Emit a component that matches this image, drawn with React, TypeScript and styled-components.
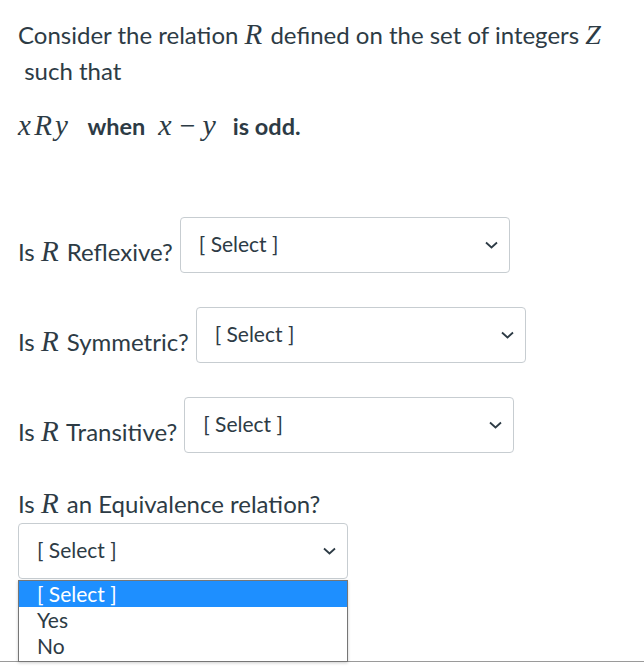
import React from "react";
import styled, { createGlobalStyle } from "styled-components";

const Global = createGlobalStyle`
  html, body { margin: 0; padding: 0; background: #fff; }
  body { font-family: Lato, "Open Sans", sans-serif; color: #2d3b45; }
`;

const Page = styled.div`
  width: 644px;
  height: 669px;
  overflow: hidden;
  box-sizing: border-box;
  padding: 16px 0 0 0;
  display: flex;
  flex-direction: column;
`;

const Content = styled.div`
  padding-left: 18px;
  display: flex;
  flex-direction: column;
`;

const Para = styled.p<{ $mt?: number }>`
  margin: ${(p) => p.$mt ?? 0}px 0 0 0;
  font-size: 24px;
  line-height: 36px;
  font-weight: 400;
`;

const Bold = styled.span<{ $ml?: number }>`
  font-weight: 700;
  font-size: 23.5px;
  margin-left: ${(p) => p.$ml ?? 0}px;
`;

const M = styled.span<{ $size?: number; $ml?: number; $ls?: number }>`
  font-family: "Liberation Serif", "DejaVu Serif", serif;
  font-style: italic;
  font-size: ${(p) => p.$size ?? 29}px;
  letter-spacing: ${(p) => p.$ls ?? 1}px;
  margin-left: ${(p) => p.$ml ?? 0}px;
`;

const Minus = styled.span`
  font-family: "Liberation Serif", serif;
  font-size: 28px;
  margin: 0 7px;
`;

const Row = styled.div<{ $mt: number }>`
  display: flex;
  align-items: flex-end;
  margin-top: ${(p) => p.$mt}px;
`;

const Label = styled.span`
  font-size: 24px;
  line-height: 30px;
  padding-bottom: 6px;
  margin-right: 7px;
  white-space: nowrap;
`;

const SelectBox = styled.div`
  position: relative;
  width: 330px;
  height: 56px;
  box-sizing: border-box;
  border: 1px solid #c7cdd1;
  border-radius: 4px;
  background: #fff;
  display: flex;
  align-items: center;
  justify-content: space-between;
  padding: 0 11px 0 18px;
  font-size: 21px;
  color: #2d3b45;
`;

const SelectText = styled.span`
  margin-top: -3px;
`;

const Block = styled.div`
  display: flex;
  flex-direction: column;
  margin-top: 35px;
`;

const BlockLabel = styled.span`
  font-size: 24px;
  line-height: 30px;
  margin-bottom: 4px;
`;

const SelectWrap = styled.div`
  position: relative;
  width: 330px;
`;

const Menu = styled.ul`
  position: absolute;
  left: 0;
  top: 57px;
  width: 330px;
  box-sizing: border-box;
  margin: 0;
  padding: 0 0 2px 0;
  list-style: none;
  background: #fff;
  border: 1px solid #767676;
  box-shadow: 0 1px 3px rgba(0, 0, 0, 0.2);
  z-index: 2;
`;

const Option = styled.li<{ $active?: boolean }>`
  height: 26px;
  line-height: 26px;
  padding-left: 18px;
  font-size: 21px;
  background: ${(p) => (p.$active ? "#1e8fff" : "#fff")};
  color: ${(p) => (p.$active ? "#fff" : "#2d3b45")};
`;

const Divider = styled.div`
  margin-top: 82px;
  height: 1px;
  background: #9a9a9a;
  width: 100%;
`;

const Chevron = () => (
  <svg width="13" height="8" viewBox="0 0 13 8">
    <polyline points="1,1.5 6.5,6.5 12,1.5" fill="none" stroke="#2d3b45" strokeWidth="1.8" />
  </svg>
);

const Select = () => (
  <SelectBox>
    <SelectText>[ Select ]</SelectText>
    <Chevron />
  </SelectBox>
);

const R = () => <M $ls={2}>R</M>;

export default function App() {
  return (
    <Page>
      <Global />
      <Content>
        <Para>
          Consider the relation <R /> defined on the set of integers <M $size={28}>Z</M>
          <br />
          &nbsp;such that
        </Para>
        <Para $mt={18}>
          <M $ls={3.5}>xRy</M>
          <Bold $ml={16}>when</Bold>
          <M $ml={13} $size={30}>x</M>
          <Minus>−</Minus>
          <M $size={30}>y</M>
          <Bold $ml={16}>is odd.</Bold>
        </Para>
        <Row $mt={73}>
          <Label>
            Is <R /> Reflexive?
          </Label>
          <Select />
        </Row>
        <Row $mt={34}>
          <Label>
            Is <R /> Symmetric?
          </Label>
          <Select />
        </Row>
        <Row $mt={34}>
          <Label>
            Is <R /> Transitive?
          </Label>
          <Select />
        </Row>
        <Block>
          <BlockLabel>
            Is <R /> an Equivalence relation?
          </BlockLabel>
          <SelectWrap>
            <Select />
            <Menu>
              <Option $active>[ Select ]</Option>
              <Option>Yes</Option>
              <Option>No</Option>
            </Menu>
          </SelectWrap>
        </Block>
      </Content>
      <Divider />
    </Page>
  );
}
